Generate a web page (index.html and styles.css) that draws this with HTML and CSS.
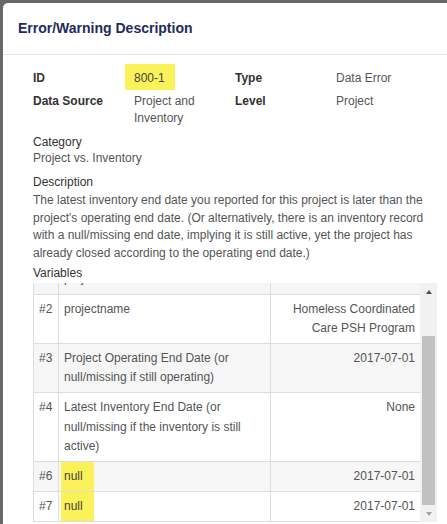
FILE: index.html
```html
<!DOCTYPE html>
<html lang="en">
<head>
<meta charset="utf-8">
<title>Error/Warning Description</title>
<link rel="stylesheet" href="styles.css">
</head>
<body>
<div class="modal">
  <div class="modal-header">
    <h4 class="title">Error/Warning Description</h4>
  </div>
  <div class="modal-body">
    <div class="meta">
      <div class="k r1">ID</div>
      <div class="v"><span class="hl">800-1</span></div>
      <div class="k r1">Type</div>
      <div class="v r1">Data Error</div>
      <div class="k">Data Source</div>
      <div class="v">Project and Inventory</div>
      <div class="k">Level</div>
      <div class="v">Project</div>
    </div>

    <div class="section cat">
      <div class="label">Category</div>
      <div class="value">Project vs. Inventory</div>
    </div>

    <div class="section desc">
      <div class="label">Description</div>
      <p class="para">The latest inventory end date you reported for this project is later than the project's operating end date. (Or alternatively, there is an inventory record with a null/missing end date, implying it is still active, yet the project has already closed according to the operating end date.)</p>
    </div>

    <div class="section vars-label">
      <div class="label">Variables</div>
    </div>

    <div class="vars">
      <div class="viewport">
        <table class="vtable">
          <colgroup>
            <col class="c-num">
            <col class="c-name">
            <col class="c-val">
          </colgroup>
          <tbody>
            <tr><td>#1</td><td>projectid</td><td class="r">101</td></tr>
            <tr><td>#2</td><td>projectname</td><td class="r">Homeless Coordinated Care PSH Program</td></tr>
            <tr><td>#3</td><td>Project Operating End Date (or null/missing if still operating)</td><td class="r">2017-07-01</td></tr>
            <tr><td>#4</td><td>Latest Inventory End Date (or null/missing if the inventory is still active)</td><td class="r">None</td></tr>
            <tr><td>#6</td><td class="hlcell"><span class="mark">null</span></td><td class="r">2017-07-01</td></tr>
            <tr><td>#7</td><td class="hlcell"><span class="mark">null</span></td><td class="r">2017-07-01</td></tr>
          </tbody>
        </table>
      </div>
      <div class="sbar">
        <div class="sbtn up"></div>
        <div class="strack"><div class="thumb"></div></div>
        <div class="sbtn down"></div>
      </div>
    </div>
  </div>
</div>
</body>
</html>
```

FILE: styles.css
```css
html, body {
  margin: 0;
  padding: 0;
  height: 524px;
  overflow: hidden;
}

body {
  background: #686868;
  font-family: "Liberation Sans", Arial, sans-serif;
  font-size: 12px;
  color: #555;
}

.modal {
  margin: 3px 0 0 3px;
  width: 464px;
  min-height: 530px;
  background: #fff;
  border-radius: 5px 0 0 0;
}

.modal-header {
  padding: 15px 15px 16px;
  border-bottom: 1px solid #e5e5e5;
}

.title {
  margin: 0;
  font-size: 14px;
  font-weight: bold;
  line-height: 20px;
  color: #1f2b5c;
}

.modal-body {
  padding: 9px 30px 0;
}

.meta {
  display: grid;
  grid-template-columns: repeat(4, 101px);
  row-gap: 3px;
  line-height: 17px;
}

.k {
  font-weight: bold;
  color: #333;
}

.v {
  color: #555;
}

.r1 {
  padding: 6px 0 3px;
}

.hl {
  display: inline-block;
  margin-left: -9px;
  padding: 6px 10px 3px 9px;
  background: #fbf158;
  color: #444;
}

.section .label {
  color: #333;
  line-height: 16px;
}

.section .value {
  line-height: 16px;
}

.cat {
  margin-top: 7px;
}

.desc {
  margin-top: 8px;
}

.para {
  margin: 2px 0 0;
  line-height: 17.6px;
}

.vars-label {
  margin-top: 3px;
}

.vars {
  display: flex;
  height: 239px;
  margin-top: 2px;
}

.viewport {
  flex: 1;
  overflow: hidden;
  display: flex;
  flex-direction: column;
  justify-content: flex-end;
}

.vtable {
  flex: none;
  width: 387px;
  table-layout: fixed;
  border-collapse: collapse;
  line-height: 19.2px;
  color: #555;
}

.c-num { width: 25px; }
.c-name { width: 212px; }
.c-val { width: 150px; }

.vtable td {
  border: 1px solid #ddd;
  padding: 5px;
  vertical-align: top;
}

.vtable tr:nth-child(odd) td {
  background: #f6f6f6;
}

.vtable td.r {
  text-align: right;
}

.vtable td.hlcell {
  padding: 0;
}

.mark {
  display: inline-block;
  vertical-align: top;
  margin-left: 2px;
  padding: 5px 11px 5px 3px;
  background: #fbf158;
  color: #444;
}

.sbar {
  width: 17px;
  background: #f1f1f1;
  display: flex;
  flex-direction: column;
}

.sbtn {
  height: 17px;
  display: flex;
  align-items: center;
  justify-content: center;
}

.sbtn.up::before {
  content: "";
  border-left: 3.5px solid transparent;
  border-right: 3.5px solid transparent;
  border-bottom: 4px solid #505050;
}

.sbtn.down::before {
  content: "";
  border-left: 3.5px solid transparent;
  border-right: 3.5px solid transparent;
  border-top: 4px solid #a3a3a3;
}

.strack {
  flex: 1;
  display: flex;
  flex-direction: column;
  justify-content: flex-end;
  padding: 0 2px;
}

.thumb {
  height: 169px;
  background: #c1c1c1;
}
```
